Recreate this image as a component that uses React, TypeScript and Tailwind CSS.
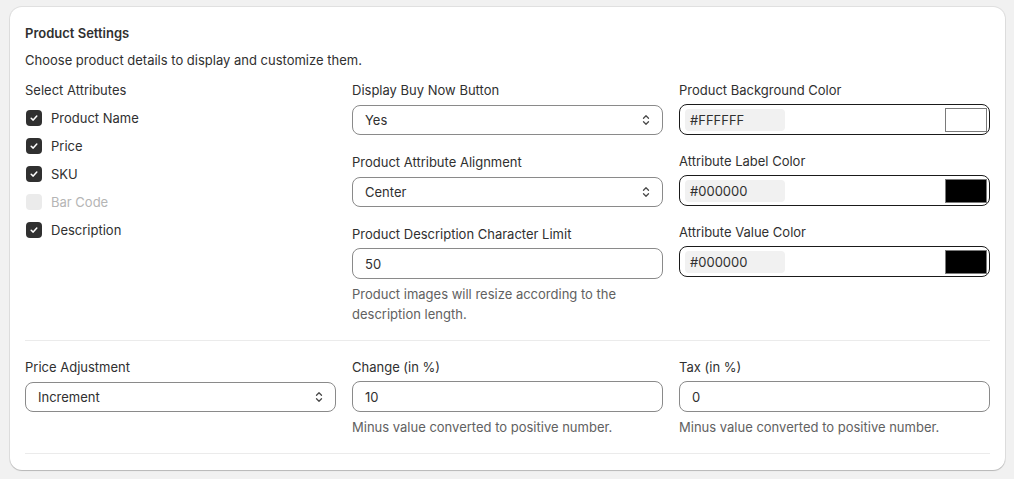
import React from "react";

const Chevron = () => (
  <svg width="20" height="20" viewBox="0 0 20 20" className="text-[#4a4a4a]">
    <path d="M7.5 8.25 10 5.75l2.5 2.5" fill="none" stroke="currentColor" strokeWidth="1.3" strokeLinecap="round" strokeLinejoin="round" />
    <path d="M7.5 11.75 10 14.25l2.5-2.5" fill="none" stroke="currentColor" strokeWidth="1.3" strokeLinecap="round" strokeLinejoin="round" />
  </svg>
);

const Check = () => (
  <svg width="10" height="10" viewBox="0 0 10 10">
    <path d="M2.2 5.2 4.2 7.1 7.8 3.1" fill="none" stroke="#fff" strokeWidth="1.5" strokeLinecap="round" strokeLinejoin="round" />
  </svg>
);

function Checkbox({ label, checked, disabled }: { label: string; checked?: boolean; disabled?: boolean }) {
  return (
    <div className="flex items-center h-5">
      <div
        className={
          "ml-px w-4 h-4 rounded-[4px] flex items-center justify-center " +
          (disabled ? "bg-[#ebebeb]" : "bg-[#303030]")
        }
      >
        {checked && <Check />}
      </div>
      <span className={"ml-[9px] " + (disabled ? "text-[#b5b5b5]" : "text-[#303030]")}>{label}</span>
    </div>
  );
}

function Select({ label, value }: { label: string; value: string }) {
  return (
    <div className="flex flex-col">
      <div className="h-5 leading-5">{label}</div>
      <div className="mt-[5px] h-[30px] rounded-lg border border-[#8a8a8a] flex items-center justify-between pl-3 pr-[6px] bg-white">
        <span>{value}</span>
        <Chevron />
      </div>
    </div>
  );
}

function TextField({ label, value, help }: { label: string; value: string; help?: React.ReactNode }) {
  return (
    <div className="flex flex-col">
      <div className="h-5 leading-5">{label}</div>
      <div className="mt-[4px] h-[31px] rounded-lg border border-[#8a8a8a] flex items-center pl-3 bg-white">
        <span>{value}</span>
      </div>
      {help && <div className="mt-[5px] text-[#616161] leading-5">{help}</div>}
    </div>
  );
}

function ColorField({ label, value, color }: { label: string; value: string; color: string }) {
  return (
    <div className="flex flex-col">
      <div className="h-5 leading-5">{label}</div>
      <div className="mt-[4px] h-[31px] rounded-lg border border-[#1a1a1a] flex items-center justify-between pl-[5px] pr-[2px] bg-white">
        <div className="w-[100px] h-[22px] rounded-[4px] bg-[#f1f1f1] flex items-center pl-[5px]">{value}</div>
        <div className="w-[42px] h-[24px] border border-[#7a7a7a]" style={{ backgroundColor: color }} />
      </div>
    </div>
  );
}

export default function App() {
  return (
    <div
      className="min-h-[479px] bg-[#f1f1f1] pl-[10px] pr-[9px] pt-[7px] pb-[10px] text-[13px] leading-5 text-[#303030]"
      style={{ fontFamily: "Inter, 'Noto Sans', sans-serif" }}
    >
      <div className="bg-white rounded-xl px-[15px] pt-4 shadow-[0_0_0_1px_rgba(0,0,0,0.07),0_1px_1px_rgba(0,0,0,0.18)]">
        <div className="font-semibold leading-5">Product Settings</div>
        <div className="mt-[7px]">Choose product details to display and customize them.</div>

        <div className="grid grid-cols-3 gap-x-4 pt-[10px] pb-4 border-b border-[#ebebeb]">
          <div className="flex flex-col">
            <div className="h-5 leading-5">Select Attributes</div>
            <div className="mt-2 flex flex-col gap-2">
              <Checkbox label="Product Name" checked />
              <Checkbox label="Price" checked />
              <Checkbox label="SKU" checked />
              <Checkbox label="Bar Code" disabled />
              <Checkbox label="Description" checked />
            </div>
          </div>
          <div className="flex flex-col gap-[17px]">
            <Select label="Display Buy Now Button" value="Yes" />
            <Select label="Product Attribute Alignment" value="Center" />
            <TextField
              label="Product Description Character Limit"
              value="50"
              help={<>Product images will resize according to the<br />description length.</>}
            />
          </div>
          <div className="flex flex-col gap-4">
            <ColorField label="Product Background Color" value="#FFFFFF" color="#ffffff" />
            <ColorField label="Attribute Label Color" value="#000000" color="#000000" />
            <ColorField label="Attribute Value Color" value="#000000" color="#000000" />
          </div>
        </div>

        <div className="grid grid-cols-3 gap-x-4 pt-4 pb-4 border-b border-[#ebebeb]">
          <Select label="Price Adjustment" value="Increment" />
          <TextField label="Change (in %)" value="10" help="Minus value converted to positive number." />
          <TextField label="Tax (in %)" value="0" help="Minus value converted to positive number." />
        </div>
        <div className="h-4" />
      </div>
    </div>
  );
}
